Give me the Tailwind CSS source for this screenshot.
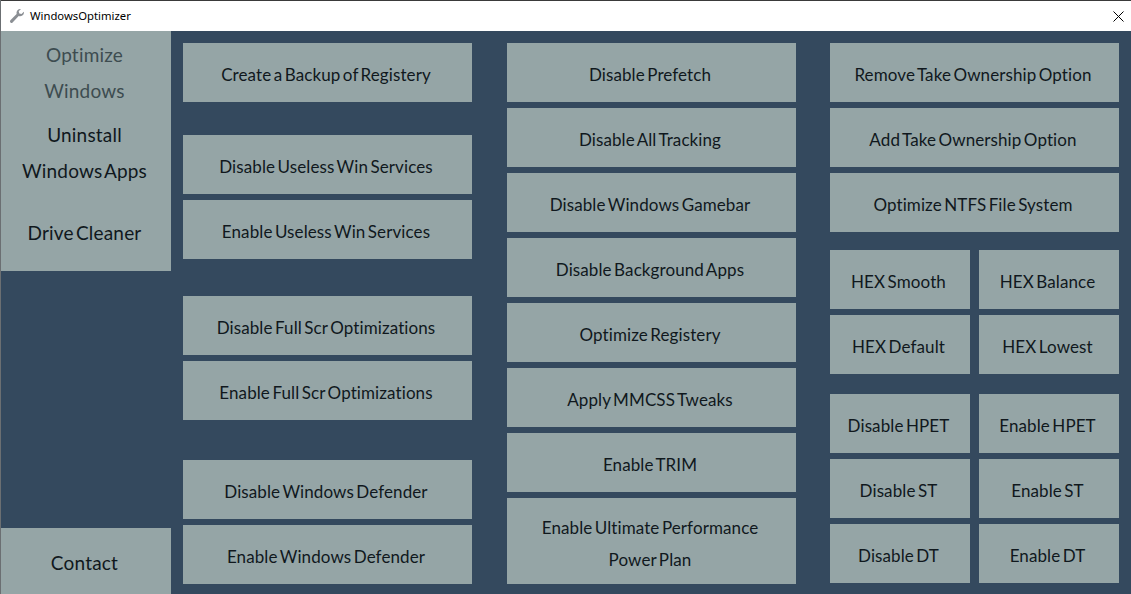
<!DOCTYPE html>
<html>
<head>
<meta charset="utf-8">
<script src="https://cdn.jsdelivr.net/npm/@tailwindcss/browser@4"></script>
</head>
<body class="m-0 p-0">
<div class="w-[1131px] h-[594px] overflow-hidden flex flex-col bg-[#34495e] font-['Lato',sans-serif] text-[17px] text-[#10181d] tracking-[0.1px] [word-spacing:-2px] border-l border-l-[#6b6f72]">
  <header class="h-[31px] shrink-0 bg-white border-t border-t-[#3a3a3a] flex items-center font-['Noto_Sans',sans-serif] text-[11.3px] tracking-normal [word-spacing:0] text-black">
    <svg class="ml-[8px] w-[16px] h-[16px]" viewBox="0 0 16 16"><path d="M15 4.200a4 4 0 0 1-5.300 3.900L3.600 14.400a1.500 1.500 0 0 1-2.200-2.100l6.200-6.300A4 4 0 0 1 12 1l-2.300 2.300.6 2.200 2.200.6L14.800 3.800z" fill="#8b8f94"/></svg>
    <span class="ml-[5px]">WindowsOptimizer</span>
    <svg class="ml-auto mr-[7px] w-[11px] h-[11px]" viewBox="0 0 11 11"><path d="M.5.5l10 10M10.500.5l-10 10" stroke="#000" fill="none"/></svg>
  </header>
  <main class="flex-1 flex min-h-0">
    <aside class="w-[170px] shrink-0 flex flex-col justify-between text-[19px] tracking-[0.2px] [word-spacing:-3px] text-center">
      <div class="h-[240px] pr-[3px] bg-[#95a5a6] flex flex-col items-center">
        <span class="h-[36px] mt-[6px] flex items-center text-[#3d4c50]">Optimize</span>
        <span class="h-[36px] flex items-center text-[#3d4c50]">Windows</span>
        <span class="h-[36px] mt-[8px] flex items-center">Uninstall</span>
        <span class="h-[36px] flex items-center">Windows Apps</span>
        <span class="h-[36px] mt-[26px] flex items-center">Drive Cleaner</span>
      </div>
      <div class="h-[66px] pt-[5px] pr-[3px] bg-[#95a5a6] flex items-center justify-center">Contact</div>
    </aside>
    <div class="flex-1 flex pt-[12px] pl-[12px] gap-[35px]">
      <section class="w-[289px] flex flex-col">
        <div class="h-[59px] pt-[5px] pr-[3px] bg-[#95a5a6] flex items-center justify-center">Create a Backup of Registery</div>
        <div class="h-[59px] pt-[5px] pr-[3px] mt-[33px] bg-[#95a5a6] flex items-center justify-center">Disable Useless Win Services</div>
        <div class="h-[59px] pt-[5px] pr-[3px] mt-[6px] bg-[#95a5a6] flex items-center justify-center">Enable Useless Win Services</div>
        <div class="h-[59px] pt-[5px] pr-[3px] mt-[37px] bg-[#95a5a6] flex items-center justify-center">Disable Full Scr Optimizations</div>
        <div class="h-[59px] pt-[5px] pr-[3px] mt-[6px] bg-[#95a5a6] flex items-center justify-center">Enable Full Scr Optimizations</div>
        <div class="h-[59px] pt-[5px] pr-[3px] mt-[40px] bg-[#95a5a6] flex items-center justify-center">Disable Windows Defender</div>
        <div class="h-[59px] pt-[5px] pr-[3px] mt-[6px] bg-[#95a5a6] flex items-center justify-center">Enable Windows Defender</div>
      </section>
      <section class="w-[289px] flex flex-col gap-[6px]">
        <div class="h-[59px] pt-[5px] pr-[3px] bg-[#95a5a6] flex items-center justify-center">Disable Prefetch</div>
        <div class="h-[59px] pt-[5px] pr-[3px] bg-[#95a5a6] flex items-center justify-center">Disable All Tracking</div>
        <div class="h-[59px] pt-[5px] pr-[3px] bg-[#95a5a6] flex items-center justify-center">Disable Windows Gamebar</div>
        <div class="h-[59px] pt-[5px] pr-[3px] bg-[#95a5a6] flex items-center justify-center">Disable Background Apps</div>
        <div class="h-[59px] pt-[5px] pr-[3px] bg-[#95a5a6] flex items-center justify-center">Optimize Registery</div>
        <div class="h-[59px] pt-[5px] pr-[3px] bg-[#95a5a6] flex items-center justify-center">Apply MMCSS Tweaks</div>
        <div class="h-[59px] pt-[5px] pr-[3px] bg-[#95a5a6] flex items-center justify-center">Enable TRIM</div>
        <div class="h-[86px] pt-[5px] pr-[3px] bg-[#95a5a6] flex flex-col items-center justify-center leading-[32px]"><span>Enable Ultimate Performance</span><span>Power Plan</span></div>
      </section>
      <section class="w-[289px] -ml-[1px] flex flex-col">
        <div class="h-[59px] pt-[5px] pr-[3px] bg-[#95a5a6] flex items-center justify-center">Remove Take Ownership Option</div>
        <div class="h-[59px] pt-[5px] pr-[3px] mt-[6px] bg-[#95a5a6] flex items-center justify-center">Add Take Ownership Option</div>
        <div class="h-[59px] pt-[5px] pr-[3px] mt-[6px] bg-[#95a5a6] flex items-center justify-center">Optimize NTFS File System</div>
        <div class="mt-[18px] grid grid-cols-[140px_140px] gap-x-[9px] gap-y-[6px] auto-rows-[59px]">
          <div class="pt-[5px] pr-[3px] bg-[#95a5a6] flex items-center justify-center">HEX Smooth</div>
          <div class="pt-[5px] pr-[3px] bg-[#95a5a6] flex items-center justify-center">HEX Balance</div>
          <div class="pt-[5px] pr-[3px] bg-[#95a5a6] flex items-center justify-center">HEX Default</div>
          <div class="pt-[5px] pr-[3px] bg-[#95a5a6] flex items-center justify-center">HEX Lowest</div>
        </div>
        <div class="mt-[20px] grid grid-cols-[140px_140px] gap-x-[9px] gap-y-[6px] auto-rows-[59px]">
          <div class="pt-[5px] pr-[3px] bg-[#95a5a6] flex items-center justify-center">Disable HPET</div>
          <div class="pt-[5px] pr-[3px] bg-[#95a5a6] flex items-center justify-center">Enable HPET</div>
          <div class="pt-[5px] pr-[3px] bg-[#95a5a6] flex items-center justify-center">Disable ST</div>
          <div class="pt-[5px] pr-[3px] bg-[#95a5a6] flex items-center justify-center">Enable ST</div>
          <div class="pt-[5px] pr-[3px] bg-[#95a5a6] flex items-center justify-center">Disable DT</div>
          <div class="pt-[5px] pr-[3px] bg-[#95a5a6] flex items-center justify-center">Enable DT</div>
        </div>
      </section>
    </div>
  </main>
</div>
</body>
</html>
